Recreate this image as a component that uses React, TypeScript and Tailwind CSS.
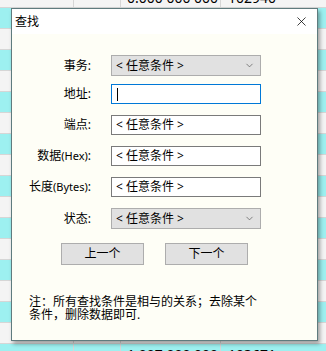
import { X, ChevronDown } from 'lucide-react';

const font = { fontFamily: '"Noto Sans", "Noto Sans CJK SC", sans-serif' };

const rows = Array.from({ length: 18 });

function Background() {
  return (
    <div className="absolute inset-0 overflow-hidden">
      <div className="flex flex-col -mt-[13px]">
        {rows.map((_, i) => (
          <div
            key={i}
            className={`relative h-[21px] border-b border-[#d6d6d6] ${i % 2 === 1 ? 'bg-[#9df0f0]' : 'bg-[#f4f4f4]'}`}
          >
            <div className="absolute left-[73px] top-0 h-full w-px bg-[#d6d6d6]" />
            <div className="absolute left-[120px] top-0 h-full w-px bg-[#d6d6d6]" />
            <div className="absolute left-[220px] top-0 h-full w-px bg-[#d6d6d6]" />
            {(i === 0 || i === 17) && (
              <>
                <span className="absolute left-[127px] top-[1px] text-[14px] leading-[20px] text-black">
                  {i === 0 ? '0.000 000 000' : '1.007 000 000'}
                </span>
                <span className="absolute left-[228px] top-[1px] text-[14px] leading-[20px] text-black">
                  {i === 0 ? '102940' : '103671'}
                </span>
              </>
            )}
          </div>
        ))}
      </div>
    </div>
  );
}

function SelectBox() {
  return (
    <div className="w-[150px] h-[21px] bg-[#e1e1e1] border border-[#adadad] flex items-center justify-between pl-[4px] pr-[5px]">
      <span className="text-[12px] leading-none">&lt; 任意条件 &gt;</span>
      <ChevronDown className="w-[11px] h-[11px] text-[#555]" strokeWidth={1.5} />
    </div>
  );
}

function InputBox({ active = false, text = '< 任意条件 >' }: { active?: boolean; text?: string }) {
  return (
    <div
      className={`w-[150px] h-[20px] bg-white border flex items-center pl-[4px] ${active ? 'border-[#0078d7]' : 'border-[#7a7a7a]'}`}
    >
      {active ? <div className="w-px h-[13px] bg-black ml-[1px]" /> : <span className="text-[12px] leading-none">{text}</span>}
    </div>
  );
}

function Row({ label, children, className = '' }: { label: React.ReactNode; children: React.ReactNode; className?: string }) {
  return (
    <div className={`flex items-center ${className}`}>
      <div className="w-[80px] text-right text-[12px] leading-none pr-[1px]">{label}</div>
      <div className="ml-[19px]">{children}</div>
    </div>
  );
}

export default function App() {
  return (
    <div className="relative w-[326px] h-[351px] overflow-hidden text-black" style={font}>
      <Background />

      <div className="absolute left-[11px] top-[8px] w-[307px] h-[333px] border border-[#5f7b7e] bg-[#fefef6] shadow-[2px_3px_4px_rgba(0,0,0,0.35)] flex flex-col">
        <div className="h-[25px] bg-white flex items-center justify-between pl-[3px] pr-[8px]">
          <span className="text-[12px]">查找</span>
          <X className="w-[15px] h-[15px]" strokeWidth={1.2} />
        </div>

        <div className="flex flex-col pt-[21px]">
          <Row label="事务:">
            <SelectBox />
          </Row>
          <Row label="地址:" className="mt-[8px]">
            <InputBox active />
          </Row>
          <Row label="端点:" className="mt-[11px]">
            <InputBox />
          </Row>
          <Row
            label={
              <>
                数据<span className="text-[11px]">(Hex)</span>:
              </>
            }
            className="mt-[11px]"
          >
            <InputBox />
          </Row>
          <Row
            label={
              <>
                长度<span className="text-[11px]">(Bytes)</span>:
              </>
            }
            className="mt-[11px]"
          >
            <InputBox />
          </Row>
          <Row label="状态:" className="mt-[11px]">
            <SelectBox />
          </Row>

          <div className="flex mt-[14px] pl-[49px] gap-[21px]">
            <button className="w-[83px] h-[22px] bg-[#e1e1e1] border border-[#adadad] text-[12px] leading-none">上一个</button>
            <button className="w-[83px] h-[22px] bg-[#e1e1e1] border border-[#adadad] text-[12px] leading-none">下一个</button>
          </div>

          <div className="mt-[30px] pl-[17px] text-[12px] leading-[13px]">
            <div>注：所有查找条件是相与的关系；去除某个</div>
            <div>条件，删除数据即可.</div>
          </div>
        </div>
      </div>
    </div>
  );
}
